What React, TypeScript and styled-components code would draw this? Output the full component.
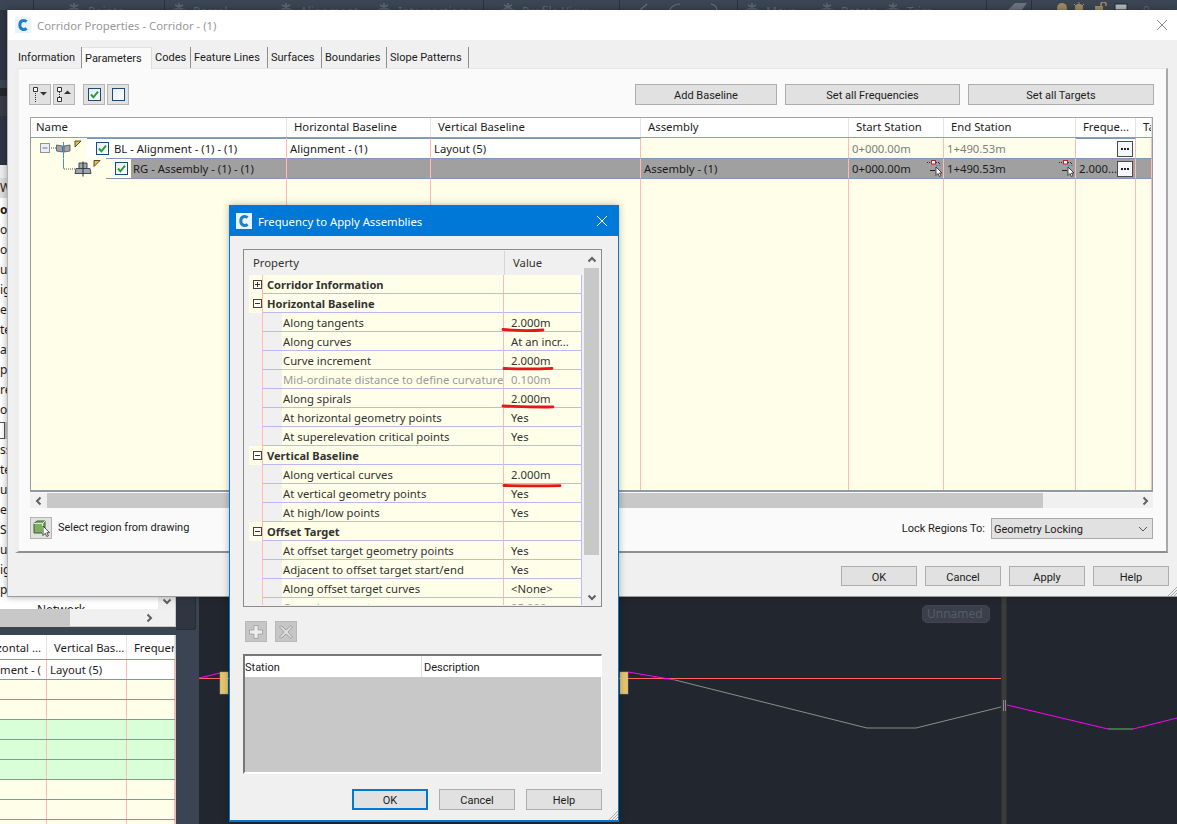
import React from 'react';
import styled, { createGlobalStyle } from 'styled-components';

const GlobalStyle = createGlobalStyle`
  html, body {
    margin: 0;
    padding: 0;
    background: #22272f;
    overflow: hidden;
  }
  * {
    box-sizing: border-box;
  }
`;

const COLUMNS = '256px 144px 210px 208px 95px 132px 60px 1fr';
const FONT = '"Noto Sans", "Open Sans", sans-serif';
const SMALL_TEXT = 'font-family: Roboto, "Noto Sans", sans-serif; font-size: 11px;';
const YELLOW = '#ffffe9';
const PINK = '#ffb9b9';
const ROW_LINE = '#7f97b5';
const LAVENDER = '#b9b9f5';

const Desktop = styled.div`
  position: relative;
  width: 1177px;
  height: 824px;
  overflow: hidden;
  font-family: ${FONT};
  font-size: 11.3px;
  color: #1c1c1c;
  background: #22272f;
  display: flex;
  flex-direction: column;
`;

/* ---------- application behind the dialogs ---------- */

const Ribbon = styled.div`
  height: 10px;
  flex: none;
  display: flex;
  overflow: hidden;
  background: #3c4554;
  color: #5f6876;
  font-size: 12px;
`;

const RibbonGroup = styled.div<{ $w: number; $pad?: number }>`
  width: ${p => p.$w}px;
  flex: none;
  border-right: 1px solid #2b313c;
  padding-top: 3px;
  padding-left: ${p => p.$pad ?? 0}px;
  display: flex;
  white-space: nowrap;
`;

const RibbonTool = styled.div<{ $w?: number }>`
  width: ${p => (p.$w ? `${p.$w}px` : 'auto')};
  flex: none;
  display: flex;
  gap: 7px;
`;

const RibbonStatus = styled.div`
  flex: 1;
  display: flex;
  align-items: flex-start;
  padding: 2px 0 0 23px;
  gap: 4px;
`;

const Work = styled.div`
  flex: 1;
  display: flex;
  min-height: 0;
`;

const Side = styled.div`
  width: 199px;
  flex: none;
  display: flex;
  background: #3b4453;
`;

const SidePanels = styled.div`
  width: 176px;
  flex: none;
  display: flex;
  flex-direction: column;
  gap: 8px;
`;

const RailTab = styled.div`
  width: 20px;
  height: 620px;
  background: #2f3642;
  border-bottom: 1px solid #262b34;
  border-right: 1px solid #262b34;
  border-radius: 0 0 3px 0;
`;

const UpperPanel = styled.div`
  height: 617px;
  flex: none;
  background: #fff;
  border-right: 1px solid #c9c9c9;
  border-bottom: 1px solid #c9c9c9;
  display: flex;
  flex-direction: column;
`;

const ToolStrip = styled.div`
  height: 155px;
  flex: none;
  background: linear-gradient(
    #2d3543 0 70px,
    #3b4453 70px 78px,
    #23272f 78px 86px,
    #3a3c46 86px 106px,
    #2d3543 106px
  );
`;

const StripGap = styled.div`
  height: 13px;
  flex: none;
  background: #eeeeee;
`;

const PaletteTab = styled.div`
  height: 20px;
  flex: none;
  background: #dedede;
  line-height: 20px;
  font-size: 12px;
`;

const PaletteList = styled.div`
  flex: 1;
  min-height: 0;
  display: flex;
  overflow: hidden;
`;

const PaletteRows = styled.div`
  flex: 1;
  padding-top: 2px;
  overflow: hidden;
`;

const PaletteRow = styled.div<{ $bold?: boolean; $indent?: number }>`
  height: 20px;
  line-height: 20px;
  font-size: 12px;
  font-weight: ${p => (p.$bold ? 700 : 400)};
  padding-left: ${p => p.$indent ?? 0}px;
  white-space: nowrap;
  display: flex;
  align-items: center;
`;

const PaletteBox = styled.div`
  width: 5px;
  height: 17px;
  flex: none;
  border: 1px solid #555;
  border-left: none;
  background: #fff;
  box-shadow: 2px 0 0 #c8c8c8;
`;

const PaletteBar = styled.div`
  width: 17px;
  flex: none;
  background: #eeeeee;
  display: flex;
  flex-direction: column;
  justify-content: flex-end;
  align-items: center;
  padding-bottom: 3px;
`;

const SideScroll = styled.div`
  height: 17px;
  flex: none;
  background: #f0f0f0;
  display: flex;
  align-items: center;
  justify-content: space-between;
  padding-right: 21px;
`;

const SideThumb = styled.div`
  width: 70px;
  height: 100%;
  background: #c8c8c8;
`;

const LowerTable = styled.div`
  flex: 1;
  min-height: 0;
  background: #fff;
  overflow: hidden;
  border-right: 1px solid #c9c9c9;
`;

const LowerRow = styled.div<{ $bg: string; $h: number }>`
  height: ${p => p.$h}px;
  display: grid;
  grid-template-columns: 47px 80px 1fr;
  background: ${p => p.$bg};
  border-bottom: 1px solid ${ROW_LINE};
  font-size: 11.3px;
`;

const LowerHeadCell = styled.div<{ $end?: boolean }>`
  overflow: hidden;
  white-space: nowrap;
  line-height: 26px;
  padding: 0 ${p => (p.$end ? 5 : 0)}px 0 7px;
  display: flex;
  justify-content: ${p => (p.$end ? 'flex-end' : 'flex-start')};
  border-right: 1px solid #e4e4e4;
`;

const LowerCell = styled.div<{ $end?: boolean }>`
  overflow: hidden;
  white-space: nowrap;
  line-height: 19px;
  padding: 0 ${p => (p.$end ? 5 : 0)}px 0 3px;
  display: flex;
  justify-content: ${p => (p.$end ? 'flex-end' : 'flex-start')};
  border-right: 1px solid ${PINK};
`;

const Canvas = styled.div`
  position: relative;
  flex: 1;
  min-width: 0;
  background: #22272f;
`;

const CanvasDrawing = styled.svg`
  display: block;
  width: 978px;
  height: 814px;
`;

const Pill = styled.div`
  position: absolute;
  left: 723px;
  top: 595px;
  width: 68px;
  height: 18px;
  border-radius: 5px;
  border: 1px solid #3f4651;
  background: #3a404b;
  color: #555c68;
  font-size: 12px;
  line-height: 16px;
  padding-left: 4px;
`;

/* ---------- corridor properties window ---------- */

const MainWindow = styled.div`
  position: absolute;
  left: 7px;
  top: 10px;
  width: 1170px;
  height: 587px;
  background: #f0f0f0;
  border-left: 1px solid #b5b5b5;
  border-bottom: 1px solid #9a9a9a;
  box-shadow: 0 0 7px rgba(0, 0, 0, 0.35);
  display: flex;
  flex-direction: column;
`;

const MainTitle = styled.div`
  height: 30px;
  flex: none;
  background: #fff;
  display: flex;
  align-items: center;
  padding: 0 9px 0 7px;
  gap: 6px;
  color: #999;
  font-size: 11.3px;
`;

const LogoTile = styled.svg`
  width: 16px;
  height: 16px;
  flex: none;
`;

const CloseBox = styled.svg`
  width: 12px;
  height: 12px;
  margin-left: auto;
  flex: none;
`;

const Tabs = styled.div`
  display: flex;
  align-items: flex-end;
  height: 22px;
  margin-top: 6px;
  padding-left: 7px;
  flex: none;
  position: relative;
  z-index: 1;
`;

const Tab = styled.div<{ $w: number; $active?: boolean }>`
  width: ${p => p.$w}px;
  height: ${p => (p.$active ? 22 : 21)}px;
  margin-bottom: ${p => (p.$active ? -1 : 0)}px;
  line-height: 21px;
  padding-left: 3px;
  background: ${p => (p.$active ? '#fafafa' : '#f0f0f0')};
  border-right: 1px solid ${p => (p.$active ? '#dcdcdc' : '#8e8e8e')};
  border-top: ${p => (p.$active ? '1px solid #e2e2e2' : 'none')};
  white-space: nowrap;
  overflow: hidden;
  ${SMALL_TEXT}
`;

const TabPanel = styled.div`
  width: 1153px;
  height: 485px;
  margin-left: 7px;
  flex: none;
  background: #fafafa;
  border-top: 1px solid #e8e8e8;
  border-left: 4px solid #eeeeee;
  border-right: 2px solid #a8a8a8;
  border-bottom: 2px solid #8f8f8f;
  padding: 15px 12px 0 11px;
  display: flex;
  flex-direction: column;
`;

const ToolRow = styled.div`
  height: 21px;
  flex: none;
  display: flex;
  align-items: stretch;
  margin-left: -1px;
`;

const IconGroup = styled.div`
  display: flex;
  gap: 2px;
  margin-right: 8px;
`;

const IconButton = styled.button`
  width: 22px;
  padding: 0;
  background: #e1e1e1;
  border: 1px solid #b4b4b4;
  display: flex;
  align-items: center;
  justify-content: center;
`;

const ActionButtons = styled.div`
  margin-left: auto;
  display: flex;
  gap: 8px;
`;

const ActionButton = styled.button<{ $w: number }>`
  width: ${p => p.$w}px;
  background: #e1e1e1;
  border: 1px solid #adadad;
  color: inherit;
  padding: 2px 0 0;
  ${SMALL_TEXT}
`;

const TableFrame = styled.div`
  width: 1123px;
  height: 391px;
  margin-top: 12px;
  flex: none;
  display: flex;
  flex-direction: column;
`;

const TableHead = styled.div`
  height: 21px;
  flex: none;
  display: grid;
  grid-template-columns: ${COLUMNS};
  background: #fff;
  border-top: 1px solid #a4a4a4;
  border-left: 1px solid #a4a4a4;
  border-right: 1px solid #a4a4a4;
  border-bottom: 1px solid #8f9db0;
`;

const HeadCell = styled.div<{ $first?: boolean }>`
  line-height: 17px;
  padding-left: ${p => (p.$first ? 5 : 7)}px;
  border-right: 1px solid #e4e4e4;
  white-space: nowrap;
  overflow: hidden;
`;

const TableBody = styled.div`
  flex: 1;
  min-height: 0;
  display: flex;
  flex-direction: column;
  background: ${YELLOW};
  border-left: 1px solid #9a9a9a;
  border-right: 1px solid #9a9a9a;
  border-bottom: 2px solid #8f9aa8;
`;

const TableRow = styled.div<{ $h?: number }>`
  display: grid;
  grid-template-columns: ${COLUMNS};
  flex: ${p => (p.$h ? 'none' : 1)};
  height: ${p => (p.$h ? `${p.$h}px` : 'auto')};
`;

const NameCell = styled.div`
  display: flex;
  border-right: 1px solid ${PINK};
  min-width: 0;
`;

const TreeGutter = styled.svg<{ $w: number }>`
  width: ${p => p.$w}px;
  flex: none;
  height: 100%;
  display: block;
`;

const NameBody = styled.div<{ $plain?: boolean; $lined?: boolean }>`
  flex: 1;
  min-width: 0;
  display: flex;
  align-items: center;
  background: ${p => (p.$plain ? '#fff' : 'transparent')};
  border-top: 1px solid ${ROW_LINE};
  border-bottom: ${p => (p.$lined ? `1px solid ${ROW_LINE}` : 'none')};
`;

const CheckSlot = styled.div`
  width: 25px;
  flex: none;
  padding-left: 9px;
  display: flex;
`;

const NameLabel = styled.div<{ $selected?: boolean }>`
  flex: 1;
  align-self: stretch;
  display: flex;
  align-items: center;
  padding-left: 2px;
  background: ${p => (p.$selected ? '#a0a0a0' : 'transparent')};
  white-space: nowrap;
`;

const Cell = styled.div<{ $tone?: 'white' | 'selected' | 'plain'; $muted?: boolean }>`
  min-width: 0;
  display: flex;
  align-items: center;
  justify-content: space-between;
  padding: 0 1px 0 3px;
  white-space: nowrap;
  overflow: hidden;
  color: ${p => (p.$muted ? '#7d7d7d' : 'inherit')};
  border-right: 1px solid ${PINK};
  background: ${p =>
    p.$tone === 'white' ? '#fff' : p.$tone === 'selected' ? '#a0a0a0' : 'transparent'};
  border-top: ${p => (p.$tone === 'plain' ? 'none' : `1px solid ${ROW_LINE}`)};
  border-bottom: ${p => (p.$tone === 'selected' ? `1px solid ${ROW_LINE}` : 'none')};
`;

const EllipsisButton = styled.svg`
  width: 16px;
  height: 16px;
  flex: none;
  margin: 0 1px 0 auto;
`;

const HScroll = styled.div`
  height: 15px;
  flex: none;
  margin-top: 1px;
  background: #f0f0f0;
  display: flex;
  align-items: stretch;
`;

const HScrollEnd = styled.div`
  width: 17px;
  flex: none;
  display: flex;
  align-items: center;
  justify-content: center;
`;

const HScrollThumb = styled.div`
  width: 996px;
  flex: none;
  background: #c8c8c8;
`;

const HScrollRest = styled.div`
  flex: 1;
`;

const PanelFoot = styled.div`
  margin-top: 9px;
  width: 1123px;
  display: flex;
  align-items: flex-start;
  ${SMALL_TEXT}
`;

const PickButton = styled.button`
  width: 22px;
  height: 22px;
  padding: 0;
  background: #e1e1e1;
  border: 1px solid #b4b4b4;
  display: flex;
  align-items: center;
  justify-content: center;
`;

const PickLabel = styled.span`
  margin-left: 6px;
  line-height: 22px;
`;

const LockLabel = styled.span`
  margin-left: auto;
  margin-right: 6px;
  line-height: 24px;
`;

const Combo = styled.div`
  width: 162px;
  height: 21px;
  margin-top: 1px;
  background: #e1e1e1;
  border: 1px solid #a8a8a8;
  display: flex;
  align-items: center;
  justify-content: space-between;
  padding: 1px 4px 0 2px;
`;

const WindowButtons = styled.div`
  display: flex;
  justify-content: flex-end;
  gap: 8px;
  margin-top: 13px;
  padding-right: 8px;
  height: 20px;
  flex: none;
`;

const WindowButton = styled.button`
  width: 76px;
  background: #e1e1e1;
  border: 1px solid #adadad;
  color: inherit;
  padding: 2px 0 0;
  ${SMALL_TEXT}
`;

const Grip = styled.svg`
  position: absolute;
  right: 0;
  bottom: 0;
  width: 12px;
  height: 12px;
`;

/* ---------- frequency dialog ---------- */

const Dialog = styled.div`
  position: absolute;
  left: 229px;
  top: 205px;
  width: 390px;
  height: 617px;
  background: #f0f0f0;
  border: 1px solid #0078d7;
  border-bottom-width: 2px;
  box-shadow: 0 0 7px rgba(0, 0, 0, 0.3);
  display: flex;
  flex-direction: column;
`;

const DialogTitle = styled.div`
  height: 30px;
  flex: none;
  background: #0078d7;
  color: #fff;
  display: flex;
  align-items: center;
  padding: 0 10px 0 6px;
  gap: 6px;
  font-size: 11.3px;
`;

const DialogBody = styled.div`
  flex: 1;
  min-height: 0;
  padding: 13px 16px 0 13px;
  display: flex;
  flex-direction: column;
`;

const PropGrid = styled.div`
  width: 359px;
  height: 358px;
  flex: none;
  border: 1px solid #8c8c8c;
  padding: 1px;
  background: #f0f0f0;
  display: flex;
`;

const PropMain = styled.div`
  width: 337px;
  flex: none;
  display: flex;
  flex-direction: column;
  min-height: 0;
`;

const PropHead = styled.div`
  height: 24px;
  flex: none;
  display: grid;
  grid-template-columns: 260px 1fr;
  line-height: 24px;
  color: #333;
`;

const PropHeadCell = styled.div<{ $last?: boolean }>`
  padding-left: 8px;
  border-right: ${p => (p.$last ? 'none' : '1px solid #d6d6d6')};
`;

const PropList = styled.div`
  flex: 1;
  min-height: 0;
  overflow: hidden;
`;

const PropRow = styled.div`
  height: 19px;
  display: grid;
  grid-template-columns: 17px 242px 78px;
`;

const Gutter = styled.div<{ $group?: boolean }>`
  padding-left: 4px;
  display: flex;
  align-items: center;
  justify-content: flex-end;
  background: ${p =>
    p.$group ? `linear-gradient(90deg, #f0f0f0 4px, ${YELLOW} 4px)` : 'transparent'};
`;

const PropName = styled.div`
  display: flex;
  border-left: 1px solid ${PINK};
  border-right: 1px solid ${PINK};
  border-bottom: 1px solid ${LAVENDER};
  min-width: 0;
  height: 19px;
`;

const PropIndent = styled.div`
  width: 19px;
  flex: none;
`;

const PropText = styled.div<{ $group?: boolean; $off?: boolean }>`
  flex: 1;
  min-width: 0;
  height: 18px;
  background: ${YELLOW};
  line-height: 20px;
  padding-left: ${p => (p.$group ? 4 : 1)}px;
  font-weight: ${p => (p.$group ? 700 : 400)};
  font-size: ${p => (p.$group ? 11.1 : 11.3)}px;
  color: ${p => (p.$off ? '#9b9b9b' : '#333')};
  white-space: nowrap;
  overflow: hidden;
`;

const PropValue = styled.div<{ $off?: boolean }>`
  height: 19px;
  background: ${YELLOW};
  border-right: 1px solid ${LAVENDER};
  border-bottom: 1px solid ${LAVENDER};
  line-height: 20px;
  padding-left: 7px;
  color: ${p => (p.$off ? '#9b9b9b' : '#333')};
  white-space: nowrap;
  overflow: hidden;
`;

const VScroll = styled.div`
  flex: 1;
  display: flex;
  flex-direction: column;
  align-items: center;
  padding-left: 1px;
`;

const VScrollEnd = styled.div`
  height: 17px;
  flex: none;
  display: flex;
  align-items: center;
  justify-content: center;
`;

const VScrollThumb = styled.div`
  width: 15px;
  height: 287px;
  flex: none;
  background: #c8c8c8;
`;

const VScrollRest = styled.div`
  flex: 1;
`;

const GridTools = styled.div`
  display: flex;
  gap: 8px;
  margin: 14px 0 0 2px;
  height: 21px;
  flex: none;
`;

const DisabledButton = styled.button`
  width: 22px;
  padding: 0;
  background: #c6c6c6;
  border: 1px solid #b8b8b8;
  display: flex;
  align-items: center;
  justify-content: center;
`;

const StationTable = styled.div`
  width: 359px;
  height: 120px;
  margin-top: 12px;
  flex: none;
  border-top: 2px solid #777;
  border-left: 2px solid #777;
  border-right: 1px solid #fff;
  border-bottom: 2px solid #fff;
  background: #c8c8c8;
  ${SMALL_TEXT}
`;

const StationHead = styled.div`
  height: 21px;
  display: grid;
  grid-template-columns: 177px 1fr;
  background: #fff;
  line-height: 23px;
`;

const StationCell = styled.div<{ $first?: boolean }>`
  height: 21px;
  overflow: hidden;
  padding-left: ${p => (p.$first ? 0 : 2)}px;
  border-right: ${p => (p.$first ? '1px solid #e0e0e0' : 'none')};
`;

const DialogButtons = styled.div`
  display: flex;
  justify-content: flex-end;
  gap: 11px;
  margin-top: 15px;
  height: 21px;
  flex: none;
`;

const DialogButton = styled.button<{ $primary?: boolean }>`
  width: 76px;
  background: #e1e1e1;
  border: ${p => (p.$primary ? '2px solid #0078d7' : '1px solid #adadad')};
  color: inherit;
  padding: 2px 0 0;
  ${SMALL_TEXT}
`;

const Annotations = styled.svg`
  position: absolute;
  left: 0;
  top: 0;
  width: 1177px;
  height: 824px;
  pointer-events: none;
`;

/* ---------- small drawings ---------- */

const ToolGlyph: React.FC = () => (
  <svg width="14" height="12" viewBox="0 0 14 12" style={{ flex: 'none' }}>
    <path d="M7 0v8M3 2l8 4M11 2L3 6" stroke="#5f6876" strokeWidth="1.500" />
    <rect x="0" y="6" width="14" height="6" fill="#4d5666" />
  </svg>
);

const Logo: React.FC = () => (
  <LogoTile viewBox="0 0 16 16">
    <rect width="16" height="16" fill="#e9f3fb" />
    <path d="M11.6 4.6C9.4 2.6 4.8 3.2 4.8 8s4.6 5.4 6.8 3.4" fill="none" stroke="#1f7fc4" strokeWidth="3" />
  </LogoTile>
);

const Check: React.FC<{ on?: boolean }> = ({ on = true }) => (
  <svg width="13" height="13" viewBox="0 0 13 13">
    <defs>
      <linearGradient id="boxFill" x1="0" y1="0" x2="1" y2="1">
        <stop offset="0" stopColor="#e6eaf0" />
        <stop offset="1" stopColor="#ffffff" />
      </linearGradient>
    </defs>
    <rect x="0.5" y="0.5" width="12" height="12" fill="url(#boxFill)" stroke="#1c4a78" />
    {on && <path d="M3 6.5l2.4 2.8L10 3.6" fill="none" stroke="#21a038" strokeWidth="2" />}
  </svg>
);

const Chevron: React.FC<{ dir: 'up' | 'down' | 'left' | 'right'; color?: string }> = ({ dir, color = '#606060' }) => {
  const d = {
    up: 'M1.5 6.5L5 3l3.5 3.5',
    down: 'M1.5 3.5L5 7l3.5-3.5',
    left: 'M6.5 1.5L3 5l3.5 3.5',
    right: 'M3.5 1.5L7 5 3.5 8.5',
  }[dir];
  return (
    <svg width="10" height="10" viewBox="0 0 10 10">
      <path d={d} fill="none" stroke={color} strokeWidth="2" />
    </svg>
  );
};

const Expander: React.FC<{ open: boolean }> = ({ open }) => (
  <svg width="9" height="9" viewBox="0 0 9 9" style={{ display: 'block' }}>
    <rect x="0.5" y="0.5" width="8" height="8" fill="#fdfdf0" stroke="#444" />
    <path d={open ? 'M2 4.5h5' : 'M2 4.5h5M4.5 2v5'} stroke="#333" />
  </svg>
);

const PickIcon: React.FC = () => (
  <svg width="16" height="17" viewBox="0 0 16 17" style={{ flex: 'none' }}>
    <path d="M1 2.500h4M10 2.500h3M13.500 3v2" stroke="#27303c" fill="none" strokeDasharray="1 1" />
    <rect x="5.500" y="0.500" width="4" height="3.500" fill="#fff" stroke="#c0202a" />
    <path d="M10 5.500h5" stroke="#2b8fe0" strokeDasharray="2 1" />
    <path d="M4 10.500h5" stroke="#222" />
    <path d="M10 7v8.500l2-2 1.500 3 1.500-.8-1.500-2.700h2.500z" fill="#fff" stroke="#222" strokeWidth="0.8" />
  </svg>
);

const Ellipsis: React.FC = () => (
  <EllipsisButton viewBox="0 0 16 16">
    <rect x="0.5" y="0.5" width="15" height="15" fill="#f6f7fa" stroke="#4a4a4a" />
    <path d="M4 8h2M7 8h2M10 8h2" stroke="#222" strokeWidth="2" />
  </EllipsisButton>
);

const CornerFlag: React.FC<{ x: number; y: number }> = ({ x, y }) => (
  <path d={`M${x} ${y}h6l-6 6z`} fill="#f3bf2c" stroke="#2a2a2a" strokeWidth="0.8" />
);

const Tree1: React.FC = () => (
  <TreeGutter $w={56} viewBox="0 0 56 20">
    <rect x="9.5" y="5.5" width="9" height="9" fill="#eeeef2" stroke="#8d93a3" />
    <path d="M11.5 10h5" stroke="#5577aa" />
    <path d="M20 10h5" stroke="#555" strokeDasharray="1 1" />
    <path d="M25.5 7l6 1v6l-6-1zM39 7l-6 1v6l6-1z" fill="#9ea4ae" stroke="#4c4f57" strokeWidth="0.8" />
    <path d="M32.5 4v16" stroke="#3e8de0" />
    <CornerFlag x={44} y={3} />
  </TreeGutter>
);

const Tree2: React.FC = () => (
  <TreeGutter $w={75} viewBox="0 0 75 20">
    <path d="M32.5 0v9" stroke="#3e8de0" />
    <path d="M32.5 9v2M33 10.5h11" stroke="#555" strokeDasharray="1 1" />
    <path d="M48 4.500h8v5.500h-8zM45 10h14l1 5H44z" fill="#9ea4ae" stroke="#3a3d44" strokeWidth="0.9" />
    <path d="M52 3v15" stroke="#2b2e35" />
    <CornerFlag x={63} y={2} />
  </TreeGutter>
);

/* ---------- data ---------- */

type Prop = { name: string; value?: string; group?: 'open' | 'closed'; off?: boolean };

const PROPS: Prop[] = [
  { name: 'Corridor Information', group: 'closed' },
  { name: 'Horizontal Baseline', group: 'open' },
  { name: 'Along tangents', value: '2.000m' },
  { name: 'Along curves', value: 'At an incr...' },
  { name: 'Curve increment', value: '2.000m' },
  { name: 'Mid-ordinate distance to define curvature', value: '0.100m', off: true },
  { name: 'Along spirals', value: '2.000m' },
  { name: 'At horizontal geometry points', value: 'Yes' },
  { name: 'At superelevation critical points', value: 'Yes' },
  { name: 'Vertical Baseline', group: 'open' },
  { name: 'Along vertical curves', value: '2.000m' },
  { name: 'At vertical geometry points', value: 'Yes' },
  { name: 'At high/low points', value: 'Yes' },
  { name: 'Offset Target', group: 'open' },
  { name: 'At offset target geometry points', value: 'Yes' },
  { name: 'Adjacent to offset target start/end', value: 'Yes' },
  { name: 'Along offset target curves', value: '<None>' },
  { name: 'Curve increment', value: '25.000m', off: true },
];

const TABS = [
  { title: 'Information', w: 67 },
  { title: 'Parameters', w: 70 },
  { title: 'Codes', w: 39 },
  { title: 'Feature Lines', w: 77 },
  { title: 'Surfaces', w: 54 },
  { title: 'Boundaries', w: 65 },
  { title: 'Slope Patterns', w: 82 },
];

const PALETTE = ['ol', 'oi', 'oi', 'ur', 'ig', 'ea', 'te', 'at', 'p', 're', 'or', '', 'ss', 'te', 'ur', 'e', 'SI', 'ur', 'ig', 'p'];

const LOWER_COLORS = [YELLOW, YELLOW, '#d8ffd8', '#d8ffd8', '#d8ffd8', YELLOW, YELLOW, YELLOW];

const App: React.FC = () => (
  <Desktop>
    <GlobalStyle />
    <Ribbon>
      <RibbonGroup $w={34} />
      <RibbonGroup $w={131} $pad={33}>
        <RibbonTool><ToolGlyph />Points</RibbonTool>
      </RibbonGroup>
      <RibbonGroup $w={319} $pad={7}>
        <RibbonTool $w={107}><ToolGlyph />Parcel</RibbonTool>
        <RibbonTool $w={98}><ToolGlyph />Alignment</RibbonTool>
        <RibbonTool><ToolGlyph />Intersections</RibbonTool>
      </RibbonGroup>
      <RibbonGroup $w={136} $pad={17}>
        <RibbonTool><ToolGlyph />Profile View</RibbonTool>
      </RibbonGroup>
      <RibbonGroup $w={118} $pad={19}>
        <svg width="90" height="8" viewBox="0 0 90 8">
          <path d="M0 8l8-7M30 8c2-4 6-7 11-7M72 1c4 1 6 4 6 7" fill="none" stroke="#6a7382" strokeWidth="1.200" />
        </svg>
      </RibbonGroup>
      <RibbonGroup $w={249} $pad={7}>
        <RibbonTool $w={75}><ToolGlyph />Move</RibbonTool>
        <RibbonTool $w={66}><ToolGlyph />Rotate</RibbonTool>
        <RibbonTool><ToolGlyph />Trim</RibbonTool>
      </RibbonGroup>
      <RibbonGroup $w={45} $pad={20}>
        <svg width="22" height="8" viewBox="0 0 22 8">
          <path d="M0 8L8 0h12l-6 8z" fill="#6d7480" />
        </svg>
      </RibbonGroup>
      <RibbonStatus>
        <svg width="84" height="8" viewBox="0 0 84 8">
          <circle cx="7" cy="6" r="5" fill="#a08c62" />
          <circle cx="24" cy="6" r="4" fill="#a08c62" />
          <path d="M24 0v2M19 2l2 2M29 2l-2 2" stroke="#a08c62" />
          <path d="M40 4h8v4h-8z" fill="#a08c62" />
          <path d="M46 4V2.500a2.500 2.500 0 0 1 5 0V4" fill="none" stroke="#a08c62" strokeWidth="1.500" />
          <rect x="60" y="2" width="12" height="6" fill="#b4b8be" stroke="#22262e" />
        </svg>
        <span>0</span>
      </RibbonStatus>
    </Ribbon>

    <Work>
      <Side>
        <SidePanels>
          <UpperPanel>
            <ToolStrip />
            <StripGap />
            <PaletteTab>W</PaletteTab>
            <PaletteList>
              <PaletteRows>
                {PALETTE.map((text, i) => (
                  <PaletteRow key={i} $bold={i === 0}>{text || <PaletteBox />}</PaletteRow>
                ))}
                <PaletteRow $indent={37}>Network</PaletteRow>
              </PaletteRows>
              <PaletteBar><Chevron dir="down" /></PaletteBar>
            </PaletteList>
            <SideScroll>
              <SideThumb />
              <Chevron dir="right" />
            </SideScroll>
          </UpperPanel>
          <LowerTable>
            <LowerRow $bg="#fff" $h={25}>
              <LowerHeadCell $end>zontal ...</LowerHeadCell>
              <LowerHeadCell>Vertical Bas...</LowerHeadCell>
              <LowerHeadCell>Frequer</LowerHeadCell>
            </LowerRow>
            <LowerRow $bg="#fff" $h={20}>
              <LowerCell $end>ment - (</LowerCell>
              <LowerCell>Layout (5)</LowerCell>
              <LowerCell />
            </LowerRow>
            {LOWER_COLORS.map((bg, i) => (
              <LowerRow key={i} $bg={bg} $h={20}>
                <LowerCell />
                <LowerCell />
                <LowerCell />
              </LowerRow>
            ))}
          </LowerTable>
        </SidePanels>
        <RailTab />
      </Side>
      <Canvas>
        <CanvasDrawing viewBox="199 10 978 814">
          <path d="M1004 597v227" stroke="#3c3c3c" strokeWidth="5" />
          <path d="M1003.5 700v11M1005.500 700v11" stroke="#8a8a8a" />
          <path d="M199 678.500H1001" stroke="#ff6464" />
          <path d="M199 678l21-5" stroke="#ff00ff" />
          <rect x="220" y="672" width="8" height="22" fill="#e6c66c" stroke="#a99" strokeWidth="0.5" />
          <rect x="620" y="672" width="8" height="22" fill="#e6c66c" stroke="#a99" strokeWidth="0.5" />
          <path d="M628 672l47 8" stroke="#ff00ff" />
          <path d="M675 680l192 48h49l85-21" fill="none" stroke="#8c8c8c" />
          <path d="M1007 705l101 24" stroke="#ff00ff" />
          <path d="M1108 729h25" stroke="#6fb36f" />
          <path d="M1133 729l44-11" stroke="#ff00ff" />
        </CanvasDrawing>
        <Pill>Unnamed</Pill>
      </Canvas>
    </Work>

    <MainWindow>
      <MainTitle>
        <Logo />
        Corridor Properties - Corridor - (1)
        <CloseBox viewBox="0 0 12 12">
          <path d="M1 1l10 10M11 1L1 11" stroke="#8a8a8a" />
        </CloseBox>
      </MainTitle>
      <Tabs>
        {TABS.map(t => (
          <Tab key={t.title} $w={t.w} $active={t.title === 'Parameters'}>{t.title}</Tab>
        ))}
      </Tabs>
      <TabPanel>
        <ToolRow>
          <IconGroup>
            <IconButton>
              <svg width="18" height="18" viewBox="0 0 18 18">
                <path d="M2.500 1.500h4v4h-4z" fill="#fff" stroke="#333" />
                <path d="M4.500 7v10" stroke="#333" strokeDasharray="1 1" />
                <path d="M9 6h7l-3.500 3.500z" fill="#333" />
              </svg>
            </IconButton>
            <IconButton>
              <svg width="18" height="18" viewBox="0 0 18 18">
                <path d="M2.500 1.500h4v4h-4zM2.500 11.500h4v4h-4z" fill="#fff" stroke="#333" />
                <path d="M4.500 6v5" stroke="#333" strokeDasharray="1 1" />
                <path d="M9 8h7l-3.500-3.500z" fill="#333" />
              </svg>
            </IconButton>
          </IconGroup>
          <IconGroup>
            <IconButton><Check /></IconButton>
            <IconButton><Check on={false} /></IconButton>
          </IconGroup>
          <ActionButtons>
            <ActionButton $w={142}>Add Baseline</ActionButton>
            <ActionButton $w={175}>Set all Frequencies</ActionButton>
            <ActionButton $w={186}>Set all Targets</ActionButton>
          </ActionButtons>
        </ToolRow>

        <TableFrame>
          <TableHead>
            {['Name', 'Horizontal Baseline', 'Vertical Baseline', 'Assembly', 'Start Station', 'End Station', 'Freque...', 'Ta'].map((h, i) => (
              <HeadCell key={h} $first={i === 0}>{h}</HeadCell>
            ))}
          </TableHead>
          <TableBody>
            <TableRow $h={20}>
              <NameCell>
                <Tree1 />
                <NameBody $plain>
                  <CheckSlot><Check /></CheckSlot>
                  <NameLabel>BL - Alignment - (1) - (1)</NameLabel>
                </NameBody>
              </NameCell>
              <Cell $tone="white">Alignment - (1)</Cell>
              <Cell $tone="white">Layout (5)</Cell>
              <Cell $tone="plain" />
              <Cell $tone="plain" $muted>0+000.00m</Cell>
              <Cell $tone="plain" $muted>1+490.53m</Cell>
              <Cell $tone="white"><Ellipsis /></Cell>
              <Cell $tone="plain" />
            </TableRow>
            <TableRow $h={21}>
              <NameCell>
                <Tree2 />
                <NameBody $lined>
                  <CheckSlot><Check /></CheckSlot>
                  <NameLabel $selected>RG - Assembly - (1) - (1)</NameLabel>
                </NameBody>
              </NameCell>
              <Cell $tone="selected" />
              <Cell $tone="selected" />
              <Cell $tone="selected">Assembly - (1)</Cell>
              <Cell $tone="selected">0+000.00m<PickIcon /></Cell>
              <Cell $tone="selected">1+490.53m<PickIcon /></Cell>
              <Cell $tone="selected">2.000...<Ellipsis /></Cell>
              <Cell $tone="selected" />
            </TableRow>
            <TableRow>
              {Array.from({ length: 8 }).map((_, i) => (
                <Cell key={i} $tone="plain" />
              ))}
            </TableRow>
          </TableBody>
          <HScroll>
            <HScrollEnd><Chevron dir="left" /></HScrollEnd>
            <HScrollThumb />
            <HScrollRest />
            <HScrollEnd><Chevron dir="right" /></HScrollEnd>
          </HScroll>
        </TableFrame>

        <PanelFoot>
          <PickButton>
            <svg width="20" height="20" viewBox="0 0 20 20">
              <path d="M3 5.500L6 3h8v9.500L11.500 15H3z" fill="#7fae62" stroke="#3e5f2c" />
              <path d="M3 5.500h8.500V15M11.500 5.500L14 3" fill="none" stroke="#dcecd0" />
              <path d="M12 8v9.500l2.200-2.200 1.600 3.200 1.600-.8-1.600-3h2.700z" fill="#fff" stroke="#222" strokeWidth="0.8" />
            </svg>
          </PickButton>
          <PickLabel>Select region from drawing</PickLabel>
          <LockLabel>Lock Regions To:</LockLabel>
          <Combo>
            Geometry Locking
            <svg width="10" height="10" viewBox="0 0 10 10">
              <path d="M1 3l4 4 4-4" fill="none" stroke="#555" />
            </svg>
          </Combo>
        </PanelFoot>
      </TabPanel>
      <WindowButtons>
        <WindowButton>OK</WindowButton>
        <WindowButton>Cancel</WindowButton>
        <WindowButton>Apply</WindowButton>
        <WindowButton>Help</WindowButton>
      </WindowButtons>
      <Grip viewBox="0 0 12 12">
        <path d="M3 12l9-9M6 12l6-6M9 12l3-3" stroke="#a8a8a8" />
      </Grip>
    </MainWindow>

    <Dialog>
      <DialogTitle>
        <Logo />
        Frequency to Apply Assemblies
        <CloseBox viewBox="0 0 12 12">
          <path d="M1 1l10 10M11 1L1 11" stroke="#fff" />
        </CloseBox>
      </DialogTitle>
      <DialogBody>
        <PropGrid>
          <PropMain>
            <PropHead>
              <PropHeadCell>Property</PropHeadCell>
              <PropHeadCell $last>Value</PropHeadCell>
            </PropHead>
            <PropList>
              {PROPS.map((p, i) => (
                <PropRow key={i}>
                  <Gutter $group={!!p.group}>
                    {p.group && <Expander open={p.group === 'open'} />}
                  </Gutter>
                  <PropName>
                    {!p.group && <PropIndent />}
                    <PropText $group={!!p.group} $off={p.off}>{p.name}</PropText>
                  </PropName>
                  <PropValue $off={p.off}>{p.value}</PropValue>
                </PropRow>
              ))}
            </PropList>
          </PropMain>
          <VScroll>
            <VScrollEnd><Chevron dir="up" /></VScrollEnd>
            <VScrollThumb />
            <VScrollRest />
            <VScrollEnd><Chevron dir="down" /></VScrollEnd>
          </VScroll>
        </PropGrid>
        <GridTools>
          <DisabledButton>
            <svg width="16" height="16" viewBox="0 0 16 16">
              <path d="M6 1.500h4V6h4.500v4H10v4.500H6V10H1.500V6H6z" fill="#efefef" stroke="#a8a8a8" />
            </svg>
          </DisabledButton>
          <DisabledButton>
            <svg width="16" height="16" viewBox="0 0 16 16">
              <path d="M3 1.500L8 6l5-4.500L14.500 3 10 8l4.500 5-1.500 1.500L8 10l-5 4.500L1.500 13 6 8 1.500 3z" fill="#dcdcdc" stroke="#a0a0a0" />
            </svg>
          </DisabledButton>
        </GridTools>
        <StationTable>
          <StationHead>
            <StationCell $first>Station</StationCell>
            <StationCell>Description</StationCell>
          </StationHead>
        </StationTable>
        <DialogButtons>
          <DialogButton $primary>OK</DialogButton>
          <DialogButton>Cancel</DialogButton>
          <DialogButton>Help</DialogButton>
        </DialogButtons>
      </DialogBody>
      <Grip viewBox="0 0 12 12">
        <path d="M3 12l9-9M6 12l6-6M9 12l3-3" stroke="#a8a8a8" />
      </Grip>
    </Dialog>

    <Annotations viewBox="0 0 1177 824">
      <g fill="none" stroke="#e8141c" strokeWidth="2.800" strokeLinecap="round">
        <path d="M503 329.500c12 1 26 1.500 40 .5" />
        <path d="M504 368.500c16 .6 32 .6 48-.2" />
        <path d="M503 406c16 .5 34 1.500 50 .8" />
        <path d="M504 485.500c18 .5 38 .7 56 .1" />
      </g>
    </Annotations>
  </Desktop>
);

export default App;
